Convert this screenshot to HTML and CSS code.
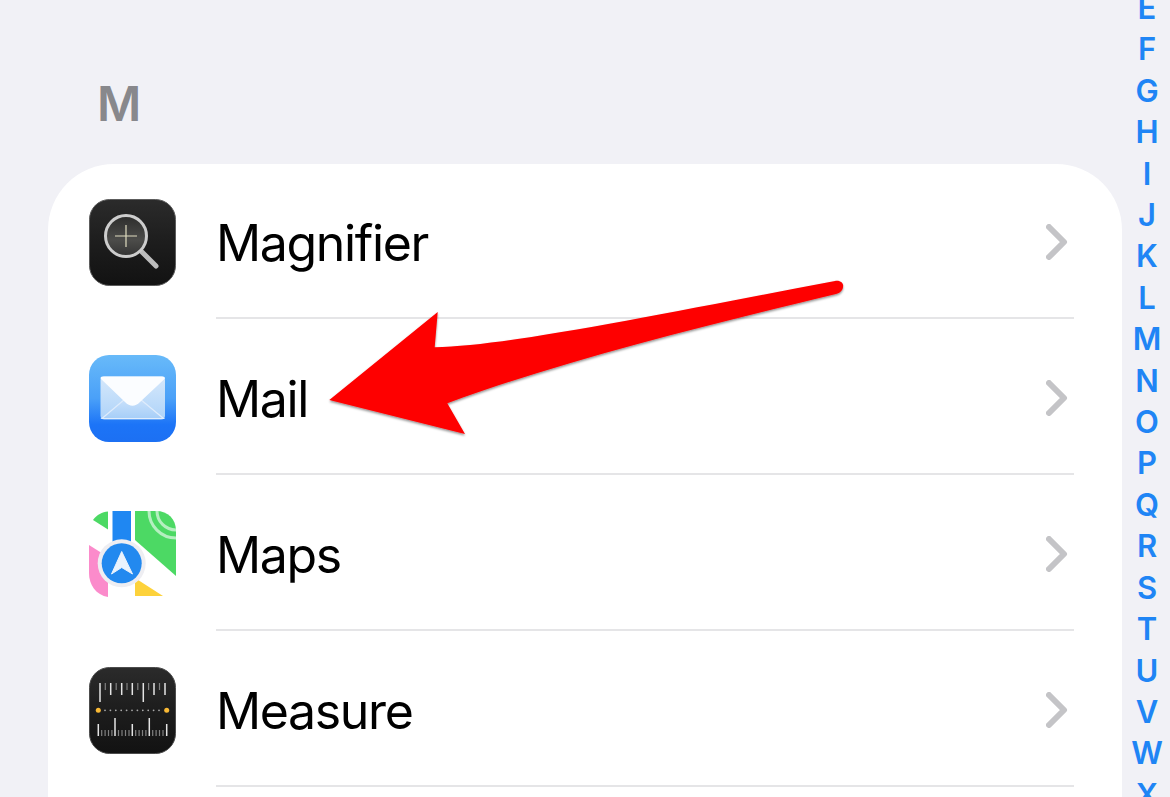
FILE: index.html
```html
<!DOCTYPE html>
<html lang="en">
<head>
    <meta charset="UTF-8">
    <meta name="viewport" content="width=device-width, initial-scale=1.0">
    <title>Settings - Apps</title>
    <link rel="stylesheet" href="styles.css">
</head>
<body>
    <div class="page">
        <div class="content">
            <div class="section-title">M</div>
            <div class="card">
                <div class="row">
                    <svg class="app-icon" viewBox="0 0 87 87">
                        <defs>
                            <linearGradient id="darkBg" x1="0" y1="0" x2="0" y2="1">
                                <stop offset="0" stop-color="#2b2b2b"/>
                                <stop offset=".5" stop-color="#1d1d1d"/>
                                <stop offset="1" stop-color="#121212"/>
                            </linearGradient>
                            <linearGradient id="lens" x1="0" y1="0" x2="0" y2="1">
                                <stop offset="0" stop-color="#2c2c2b"/>
                                <stop offset=".6" stop-color="#4c4c4a"/>
                                <stop offset="1" stop-color="#333"/>
                            </linearGradient>
                        </defs>
                        <rect x=".5" y=".5" width="86" height="86" rx="20" fill="url(#darkBg)" stroke="#5c5c5c"/>
                        <path d="M52 52L67 67" stroke="#bdbdbd" stroke-width="5" stroke-linecap="round"/>
                        <circle cx="37" cy="37" r="20.500" fill="url(#lens)" stroke="#cdcdcd" stroke-width="3"/>
                        <path d="M37 26V48M26 37H48" stroke="#e0dcc0" stroke-width="1.200"/>
                    </svg>
                    <div class="row-body">
                        <span class="row-label">Magnifier</span>
                        <svg class="chevron" viewBox="0 0 22 36"><path d="M3 3L18 18L3 33"/></svg>
                    </div>
                </div>
                <div class="row">
                    <svg class="app-icon" viewBox="0 0 87 87">
                        <defs>
                            <linearGradient id="mailBg" x1="0" y1="0" x2="0" y2="1">
                                <stop offset="0" stop-color="#68baf9"/>
                                <stop offset=".5" stop-color="#4aa0f8"/>
                                <stop offset=".8" stop-color="#1c74f7"/>
                                <stop offset="1" stop-color="#1c70f3"/>
                            </linearGradient>
                            <linearGradient id="mailBody" x1="0" y1="0" x2="0" y2="1">
                                <stop offset="0" stop-color="#d6e8fb"/>
                                <stop offset="1" stop-color="#aed3f9"/>
                            </linearGradient>
                            <linearGradient id="mailFold" x1="0" y1="0" x2="0" y2="1">
                                <stop offset="0" stop-color="#cfe4fb"/>
                                <stop offset="1" stop-color="#a6cef8"/>
                            </linearGradient>
                        </defs>
                        <rect width="87" height="87" rx="20" fill="url(#mailBg)"/>
                        <rect x="11.500" y="21.500" width="64.500" height="43" rx="4" fill="url(#mailBody)"/>
                        <path d="M13 63.500L36 44Q43.500 39 51 44L74.500 63.500Z" fill="url(#mailFold)" stroke="#dfecfc" stroke-width="1.200"/>
                        <path d="M14 21.500H73.500C76 21.500 76.500 23 75.500 24L51 47C46 52 41 52 36 47L12 24C11 23 11.500 21.500 14 21.500Z" fill="#fbfdff"/>
                    </svg>
                    <div class="row-body">
                        <span class="row-label">Mail</span>
                        <svg class="chevron" viewBox="0 0 22 36"><path d="M3 3L18 18L3 33"/></svg>
                    </div>
                </div>
                <div class="row">
                    <svg class="app-icon" viewBox="0 0 87 87">
                        <path d="M19 .500V18.500L4 9C8 3.500 13 1 19 .500Z" fill="#4cd964"/>
                        <rect x="23.500" width="18.500" height="32" fill="#1f87f2"/>
                        <path d="M46 0H67C79 0 87 8 87 20V65L46 29Z" fill="#4cd964"/>
                        <path d="M60 0A27 27 0 0 0 87 27M68 0A19 19 0 0 0 87 19" fill="none" stroke="#b5efc0" stroke-width="3"/>
                        <path d="M0 34L19 46V86C7 84 0 74 0 62Z" fill="#fb8bcb"/>
                        <path d="M46 67L74 85H46Z" fill="#fdd23b"/>
                        <circle cx="32.700" cy="52.300" r="24" fill="#eeeef2"/>
                        <circle cx="32.700" cy="52.300" r="20" fill="#2289ef"/>
                        <path d="M32.700 40.500L43.500 63L32.700 56.500L22.500 63Z" fill="#eaf3fd" stroke="#eaf3fd" stroke-linejoin="round"/>
                    </svg>
                    <div class="row-body">
                        <span class="row-label">Maps</span>
                        <svg class="chevron" viewBox="0 0 22 36"><path d="M3 3L18 18L3 33"/></svg>
                    </div>
                </div>
                <div class="row">
                    <svg class="app-icon" viewBox="0 0 87 87">
                        <rect x=".5" y=".5" width="86" height="86" rx="20" fill="url(#darkBg)" stroke="#4c4c4c"/>
                        <path d="M16.300 16V23M27.200 16V23M38 16V23M48.800 16V23M59.600 16V23M70.500 16V23" stroke="#808080" stroke-width="1.200"/>
                        <path d="M11 16V35M54.300 16V35M21.700 16V28M32.700 16V28M43.300 16V28M65 16V28M76 16V28" stroke="#e4e4e4" stroke-width="1.500"/>
                        <path d="M16 43.300h.01M21.400 43.300h.01M26.800 43.300h.01M32.200 43.300h.01M37.600 43.300h.01M43 43.300h.01M48.400 43.300h.01M53.800 43.300h.01M59.200 43.300h.01M64.600 43.300h.01M70 43.300h.01" stroke="#a8a8a8" stroke-width="1.800" stroke-linecap="round"/>
                        <circle cx="9.300" cy="43.300" r="2.500" fill="#f9b935"/>
                        <circle cx="77.700" cy="43.300" r="2.500" fill="#f9b935"/>
                        <path d="M12.700 63V69M16.100 63V69M19.500 63V69M22.900 63V69M29.500 63V69M33 63V69M36.500 63V69M40 63V69M46.700 63V69M50.100 63V69M53.500 63V69M56.900 63V69M63.700 63V69M67.100 63V69M70.500 63V69M74 63V69" stroke="#808080" stroke-width="1.200"/>
                        <path d="M9.300 57V69M26 51V69M43.300 57V69M60.300 51V69M77.700 57V69" stroke="#e4e4e4" stroke-width="1.500"/>
                    </svg>
                    <div class="row-body">
                        <span class="row-label">Measure</span>
                        <svg class="chevron" viewBox="0 0 22 36"><path d="M3 3L18 18L3 33"/></svg>
                    </div>
                </div>
            </div>
        </div>
        <div class="az-index">
            <span>E</span><span>F</span><span>G</span><span>H</span><span>I</span><span>J</span><span>K</span><span>L</span><span>M</span><span>N</span><span>O</span><span>P</span><span>Q</span><span>R</span><span>S</span><span>T</span><span>U</span><span>V</span><span>W</span><span>X</span>
        </div>
    </div>

    <!-- annotation drawn on top of the screenshot -->
    <svg class="arrow" viewBox="0 0 1170 797">
        <defs>
            <filter id="arrowShadow" x="-5%" y="-10%" width="110%" height="125%">
                <feDropShadow dx="0" dy="1.500" stdDeviation="1" flood-color="#000" flood-opacity=".45"/>
            </filter>
        </defs>
        <path filter="url(#arrowShadow)" fill="#fe0000" d="M329.300 400L437.700 312L434.700 347.300C510 346 680 310 835 281C841 280 844 284 843 287C843 290 840 293 836 294C720 322 570 358 447.300 403.300L465 434Z"/>
    </svg>
</body>
</html>
```
FILE: styles.css
```css
body {
    margin: 0;
    padding: 0;
    overflow: hidden;
    background-color: #f1f1f6;
    font-family: Inter, "Liberation Sans", sans-serif;
}
.page {
    display: flex;
    height: 797px;
    overflow: hidden;
}
.content {
    width: 1074px;
    margin-left: 48px;
}
.section-title {
    height: 164px;
    padding: 74px 0 0 49px;
    box-sizing: border-box;
    font-size: 48px;
    line-height: 60px;
    font-weight: 600;
    letter-spacing: -1px;
    color: #88888c;
}
.card {
    background: #fff;
    border-radius: 66px 66px 0 0;
    padding-bottom: 40px;
}
.row {
    display: flex;
    align-items: center;
    padding-left: 41px;
}
.app-icon {
    width: 87px;
    height: 87px;
    flex: none;
}
.row-body {
    flex: 1;
    display: flex;
    align-items: center;
    justify-content: space-between;
    height: 156px;
    box-sizing: border-box;
    margin: -1.5px 48px 1.5px 40px;
    padding: 5px 6px 0 0;
    border-bottom: 2px solid #e5e5e7;
}
.row-label {
    padding-top: 2px;
    font-size: 50px;
    letter-spacing: -1.35px;
    color: #000;
}
.chevron {
    width: 22px;
    height: 36px;
    fill: none;
    stroke: #c4c4c7;
    stroke-width: 6;
    stroke-linecap: round;
    stroke-linejoin: round;
}
.az-index {
    flex: 1;
    display: flex;
    flex-direction: column;
    align-items: center;
    margin: -13px 0 0 2px;
    font-size: 31px;
    font-weight: 600;
    line-height: 41.4px;
    color: #1f85f5;
}
.arrow {
    position: absolute;
    top: 0;
    left: 0;
    width: 1170px;
    height: 797px;
}
```
